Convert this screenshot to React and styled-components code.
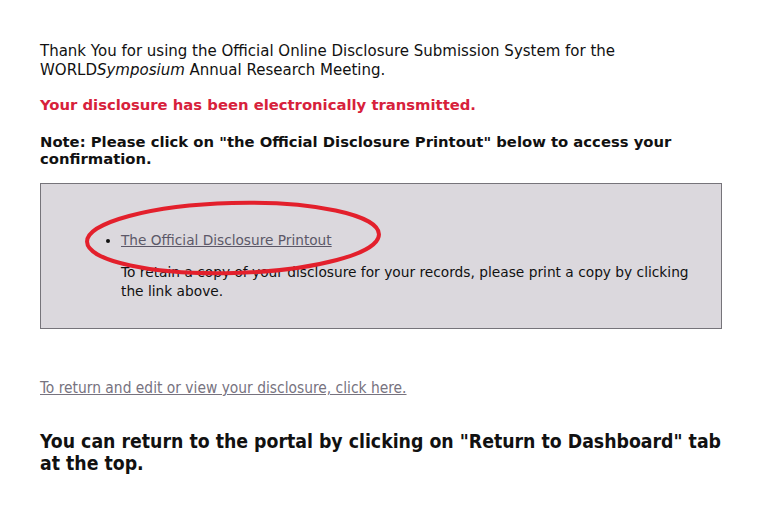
import React from 'react';
import styled, { createGlobalStyle } from 'styled-components';

const GlobalStyle = createGlobalStyle`
  body {
    margin: 0;
    background: #ffffff;
    font-family: "DejaVu Sans", Verdana, sans-serif;
    color: #111111;
  }
`;

const Page = styled.div`
  // box
  width: 682px;
  padding: 42px 0 40px 40px;
`;

const Intro = styled.p`
  font-size: 15px;
  line-height: 19px;
  margin: 0;
`;

const Notice = styled.p`
  color: ${props => props.color || '#111111'};
  font-size: 14.8px;
  font-weight: bold;
  line-height: 17px;
  margin: ${props => props.margin || '0'};
`;

const PrintBox = styled.div`
  // display
  position: relative;
  // box
  margin-top: 16px;
  height: 146px;
  box-sizing: border-box;
  padding: 47px 0 0 50px;
  background: #dbd8dd;
  border: 1px solid #76747a;
`;

const LinkList = styled.ul`
  margin: 0;
  padding: 0 0 0 30px;
  font-size: 13.7px;
`;

const LinkItem = styled.li`
  line-height: 18px;
`;

const Link = styled.a`
  color: #5c5868;
  text-decoration: underline;
`;

const Hint = styled.p`
  font-size: 13.75px;
  line-height: 19px;
  margin: 14px 0 0 30px;
  white-space: nowrap;
`;

const Ring = styled.svg`
  position: absolute;
  left: 40px;
  top: 8px;
  pointer-events: none;
`;

const EditLink = styled.a`
  display: inline-block;
  margin-top: 50px;
  color: #77737f;
  font-family: "DejaVu Sans Condensed", "DejaVu Sans", sans-serif;
  font-size: 15.4px;
  line-height: 18px;
  text-decoration: underline;
`;

const Portal = styled.h2`
  margin: 34px 0 0;
  font-family: "DejaVu Sans Condensed", "DejaVu Sans", sans-serif;
  font-size: 19.3px;
  font-weight: bold;
  line-height: 22px;
  white-space: nowrap;
  color: #111111;
`;

export default function App() {
  return (
    <>
      <GlobalStyle />
      <Page>
        <Intro>
          Thank You for using the Official Online Disclosure Submission System for the
          <br />
          WORLD<i>Symposium</i> Annual Research Meeting.
        </Intro>
        <Notice color="#d7213b" margin="16px 0 0">
          Your disclosure has been electronically transmitted.
        </Notice>
        <Notice margin="20px 0 0">
          Note: Please click on "the Official Disclosure Printout" below to access your
          <br />
          confirmation.
        </Notice>
        <PrintBox>
          <LinkList>
            <LinkItem>
              <Link href="#">The Official Disclosure Printout</Link>
            </LinkItem>
          </LinkList>
          <Hint>
            To retain a copy of your disclosure for your records, please print a copy by clicking
            <br />
            the link above.
          </Hint>
          <Ring width="310" height="90" viewBox="0 0 310 90">
            <ellipse
              cx="152"
              cy="46"
              rx="146"
              ry="35"
              fill="none"
              stroke="#e3202c"
              strokeWidth="4"
              transform="rotate(-1.5 152 46)"
            />
          </Ring>
        </PrintBox>
        <EditLink href="#">To return and edit or view your disclosure, click here.</EditLink>
        <Portal>
          You can return to the portal by clicking on "Return to Dashboard" tab
          <br />
          at the top.
        </Portal>
      </Page>
    </>
  );
}
